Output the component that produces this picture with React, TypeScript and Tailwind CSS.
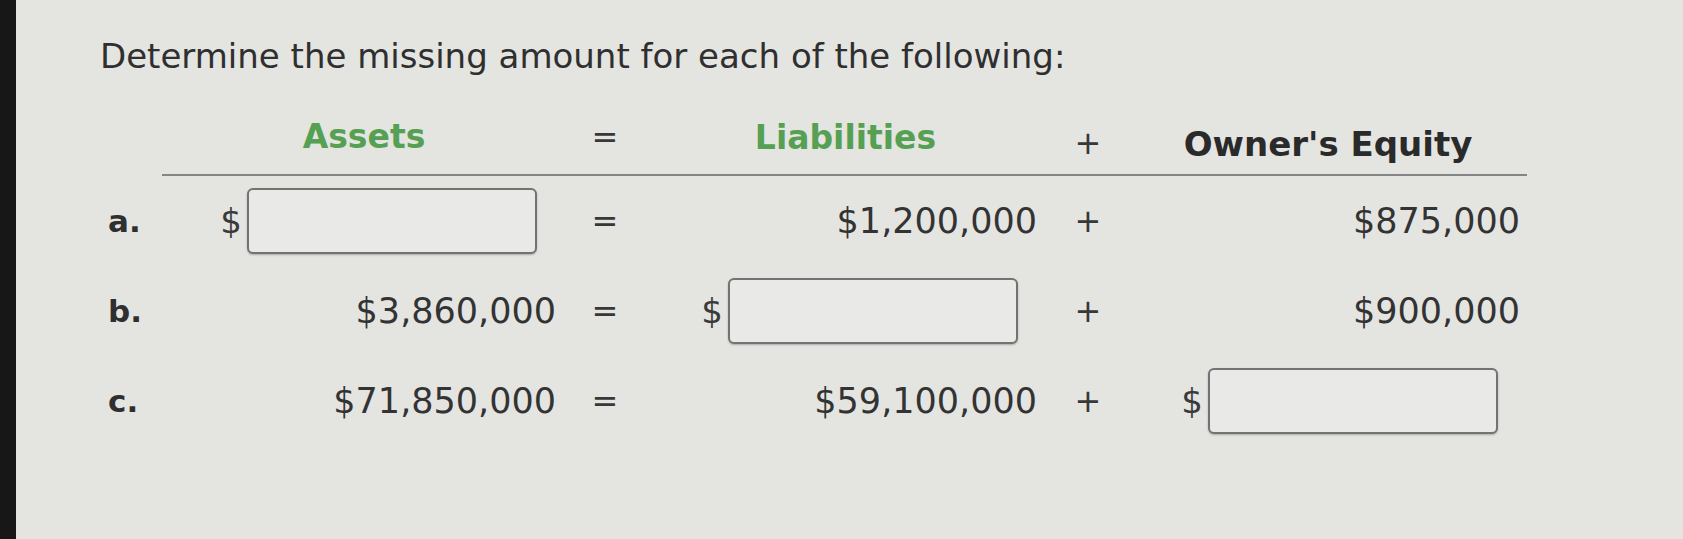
import React from 'react';

const font = { fontFamily: '"DejaVu Sans", Verdana, sans-serif' };

const AnswerBox: React.FC = () => (
    <div className="flex items-center justify-end pr-[29px] gap-[5px]">
        <span className="text-[34px] text-[#3a3a3a] leading-none">$</span>
        <input
            type="text"
            className="w-[290px] h-[66px] rounded-[6px] border-2 border-[#737373] bg-[#e9e9e7] shadow-[0_1px_2px_rgba(0,0,0,0.25)] outline-none"
        />
    </div>
);

const Amount: React.FC<{ value: string; pr?: string }> = ({ value, pr = 'pr-[10px]' }) => (
    <div className={`text-right text-[35px] text-[#333] ${pr}`}>{value}</div>
);

const Op: React.FC<{ sign: string }> = ({ sign }) => (
    <div className="text-center text-[32px] text-[#383838]">{sign}</div>
);

const Label: React.FC<{ text: string }> = ({ text }) => (
    <div className="text-[31px] font-bold text-[#2f2f2f]">{text}</div>
);

const App: React.FC = () => {
    return (
        <div className="w-[1683px] h-[539px] bg-[#e4e4e1] flex overflow-hidden" style={font}>
            {/* dark screen bezel on the left */}
            <div className="w-4 h-full bg-[#171717]" />

            <div className="flex-1 pl-[84px] pt-[30px]">
                <h1 className="text-[34px] text-[#2f2f2f] leading-[52px]">
                    Determine the missing amount for each of the following:
                </h1>

                <div className="grid grid-cols-[54px_404px_78px_403px_82px_398px] ml-[8px] mt-[16px] items-center">
                    {/* header */}
                    <div className="h-[78px]" />
                    <div className="h-[78px] flex items-center justify-center border-b-2 border-[#858585] text-[33px] font-bold text-[#55a052] pt-[2px]">
                        Assets
                    </div>
                    <div className="h-[78px] flex items-center justify-center border-b-2 border-[#858585] text-[32px] text-[#383838] pt-[2px]">
                        =
                    </div>
                    <div className="h-[78px] flex items-center justify-center border-b-2 border-[#858585] text-[33px] font-bold text-[#55a052] pt-[4px]">
                        Liabilities
                    </div>
                    <div className="h-[78px] flex items-center justify-center border-b-2 border-[#858585] text-[32px] text-[#383838] pt-[14px]">
                        +
                    </div>
                    <div className="h-[78px] flex items-center justify-center border-b-2 border-[#858585] text-[34px] font-bold text-[#2a2a2a] pt-[16px]">
                        Owner&apos;s Equity
                    </div>

                    {/* row a */}
                    <div className="h-[90px] flex items-center"><Label text="a." /></div>
                    <AnswerBox />
                    <Op sign="=" />
                    <Amount value="$1,200,000" />
                    <Op sign="+" />
                    <Amount value="$875,000" pr="pr-[7px]" />

                    {/* row b */}
                    <div className="h-[90px] flex items-center"><Label text="b." /></div>
                    <Amount value="$3,860,000" />
                    <Op sign="=" />
                    <AnswerBox />
                    <Op sign="+" />
                    <Amount value="$900,000" pr="pr-[7px]" />

                    {/* row c */}
                    <div className="h-[90px] flex items-center"><Label text="c." /></div>
                    <Amount value="$71,850,000" />
                    <Op sign="=" />
                    <Amount value="$59,100,000" />
                    <Op sign="+" />
                    <AnswerBox />
                </div>
            </div>
        </div>
    );
};

export default App;
